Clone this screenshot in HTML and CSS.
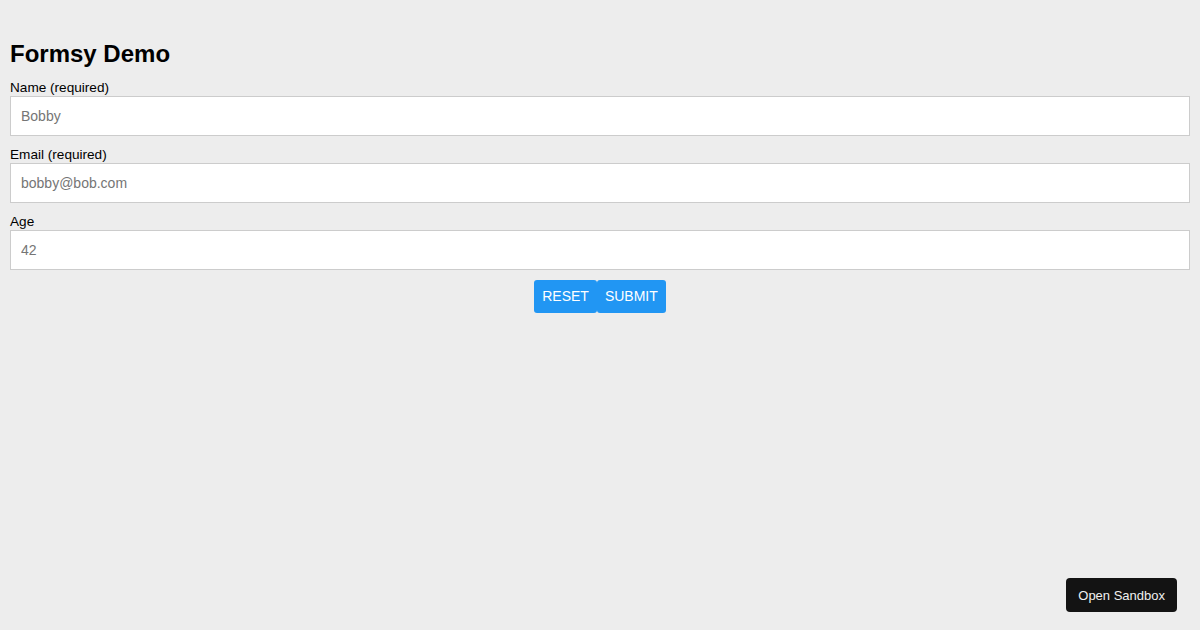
FILE: index.html
```html
<!DOCTYPE html>
<html>
<head>
<meta charset="utf-8">
<link rel="stylesheet" href="styles.css">
</head>
<body>
<div class="app">
  <h1 class="title">Formsy Demo</h1>
  <form class="form">
    <div class="field">
      <label class="label">Name (required)</label>
      <input class="input" type="text" placeholder="Bobby">
    </div>
    <div class="field">
      <label class="label">Email (required)</label>
      <input class="input" type="text" placeholder="bobby@bob.com">
    </div>
    <div class="field">
      <label class="label">Age</label>
      <input class="input" type="text" placeholder="42">
    </div>
    <div class="buttons">
      <button type="button" class="btn">RESET</button>
      <button type="button" class="btn">SUBMIT</button>
    </div>
  </form>
</div>
<a class="sandbox">Open Sandbox</a>
</body>
</html>
```
FILE: styles.css
```css
html, body {
  margin: 0;
  padding: 0;
  background: #ededed;
  font-family: "Liberation Sans", Arial, sans-serif;
  color: #000;
}
.app {
  padding: 40px 10px 0 10px;
}
.title {
  margin: 0 0 11px 0;
  font-size: 24px;
  line-height: 28px;
  font-weight: bold;
}
.form {
  display: flex;
  flex-direction: column;
}
.field {
  display: flex;
  flex-direction: column;
  margin-bottom: 10px;
}
.label {
  font-size: 13.6px;
  line-height: 17px;
}
.input {
  box-sizing: border-box;
  height: 40px;
  width: 100%;
  margin: 0;
  border: 1px solid #cccccc;
  background: #fff;
  padding: 0 10px;
  font-family: "Liberation Sans", Arial, sans-serif;
  font-size: 14px;
  outline: none;
}
.input::placeholder {
  color: #757575;
}
.buttons {
  display: flex;
  justify-content: center;
}
.btn {
  height: 33px;
  padding: 0 8px 2px 8px;
  border: none;
  border-radius: 3px;
  background: #2196f3;
  color: #fff;
  font-family: "Liberation Sans", Arial, sans-serif;
  font-size: 14px;
  margin: 0;
}
.sandbox {
  position: fixed;
  right: 23px;
  bottom: 18px;
  height: 34px;
  padding: 0 12px;
  display: flex;
  align-items: center;
  background: #131313;
  color: #f0f0f0;
  border-radius: 4px;
  font-size: 13px;
  box-sizing: border-box;
}
```
